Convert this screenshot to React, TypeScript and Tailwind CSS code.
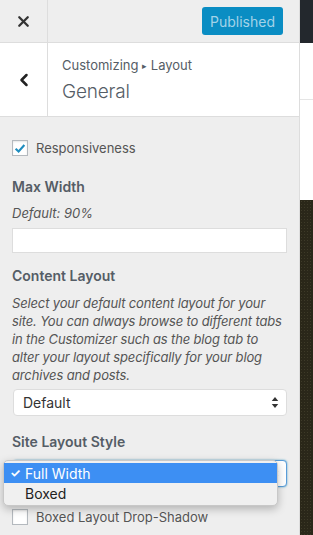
import { ChevronLeft, X } from "lucide-react"

const font = { fontFamily: "Inter, 'Noto Sans', sans-serif" }

const Checkbox = ({ checked }: { checked?: boolean }) => (
  <span className="flex h-4 w-4 shrink-0 items-center justify-center border border-[#b4b9be] bg-white shadow-[inset_0_1px_2px_rgba(0,0,0,0.1)]">
    {checked && (
      <svg viewBox="0 0 16 16" className="h-[15px] w-[15px]">
        <path d="M3 8.2 L6.4 11.4 L13 4" fill="none" stroke="#1e8cbe" strokeWidth="2.4" />
      </svg>
    )}
  </span>
)

const SelectArrows = () => (
  <svg viewBox="0 0 8 14" className="h-[13px] w-[8px]">
    <path d="M4 1 L7.5 5.5 H0.5 Z M4 13 L0.5 8.5 H7.5 Z" fill="#333" />
  </svg>
)

export default function App() {
  return (
    <div className="flex h-[535px] w-[313px] overflow-hidden text-[#555]" style={font}>
      {/* Customizer sidebar */}
      <div className="relative flex w-[300px] shrink-0 flex-col border-r border-[#ddd] bg-[#eee]">
        {/* Top bar */}
        <div className="flex h-[43px] shrink-0 items-center border-b border-[#ddd]">
          <div className="flex h-full w-[48px] items-center justify-center border-r border-[#ddd]">
            <X size={17} strokeWidth={3.2} className="text-[#333]" />
          </div>
          <div className="ml-auto mr-[16px] flex h-[28px] w-[81px] items-center justify-center rounded-[3px] bg-[#0a8dc3] text-[14px] text-[#a3d3e8]">
            Published
          </div>
        </div>

        {/* Section header */}
        <div className="flex h-[74px] shrink-0 border-b border-[#ddd] bg-white">
          <div className="flex w-[48px] items-center justify-center border-r border-[#ddd]">
            <ChevronLeft size={20} strokeWidth={3} className="text-[#222]" />
          </div>
          <div className="flex flex-col justify-center pl-[14px]">
            <span className="text-[13px] leading-[18px] text-[#555d66]">
              Customizing <span className="text-[9px] align-[1px]">▸</span> Layout
            </span>
            <span className="mt-[6px] text-[19px] leading-[22px] font-light tracking-[-0.2px] text-[#555d66]">General</span>
          </div>
        </div>

        {/* Controls */}
        <div className="flex flex-col px-[12px] pt-[23px]">
          <label className="flex h-4 items-center gap-[8px]">
            <Checkbox checked />
            <span className="text-[13px] leading-[16px]">Responsiveness</span>
          </label>

          <div className="mt-[22px] text-[14px] leading-[18px] font-semibold text-[#555d66]">Max Width</div>
          <div className="mt-[9px] text-[13px] leading-[16px] italic">Default: 90%</div>
          <div className="mt-[7px] h-[25px] w-[275px] border border-[#ddd] bg-white" />

          <div className="mt-[14px] text-[14px] leading-[18px] font-semibold text-[#555d66]">Content Layout</div>
          <p className="mt-[9px] text-[13px] leading-[18px] italic tracking-[-0.15px]">
            Select your default content layout for your site. You can always browse to different tabs in the Customizer
            such as the blog tab to alter your layout specifically for your blog archives and posts.
          </p>
          <div className="mt-[5px] ml-[1px] flex h-[27px] w-[274px] items-center justify-between rounded-[4px] border border-[#ddd] bg-white pl-[9px] pr-[7px] text-[14px] text-[#333]">
            <span>Default</span>
            <SelectArrows />
          </div>

          <div className="mt-[17px] text-[14px] leading-[18px] font-semibold text-[#555d66]">Site Layout Style</div>
          <div className="mt-[9px] ml-[1px] flex h-[27px] w-[274px] items-center justify-end rounded-[4px] border border-[#5b9dd9] bg-white pr-[7px] shadow-[0_0_2px_rgba(30,140,190,0.8)]">
            <SelectArrows />
          </div>

          <label className="mt-[22px] flex h-4 items-center gap-[8px]">
            <Checkbox />
            <span className="text-[13px] leading-[16px]">Boxed Layout Drop-Shadow</span>
          </label>
        </div>

        {/* Open select menu */}
        <div className="absolute left-[3px] top-[460px] w-[275px] rounded-[5px] border border-[#c8c8c8] bg-[#f0f0f0] py-[2px] text-[14px] text-[#222] shadow-[0_3px_8px_rgba(0,0,0,0.25)]">
          <div className="flex h-[20px] items-center bg-[#3d8ff3] text-white">
            <span className="w-[21px] pl-[6px] text-[12px] font-bold">✓</span>
            <span>Full Width</span>
          </div>
          <div className="flex h-[20px] items-center">
            <span className="w-[21px]" />
            <span>Boxed</span>
          </div>
        </div>
      </div>

      {/* Preview strip */}
      <div className="flex flex-1 flex-col">
        <div className="h-[43px] shrink-0 bg-[#23282d]" />
        <div className="h-[57px] shrink-0 border-b border-[#e5e5e5] bg-white" />
        <div className="h-[100px] shrink-0 bg-white" />
        <div className="flex-1 bg-[#2a2719] bg-[radial-gradient(#3d3a28_1px,transparent_1px)] bg-[length:3px_3px]" />
      </div>
    </div>
  )
}
